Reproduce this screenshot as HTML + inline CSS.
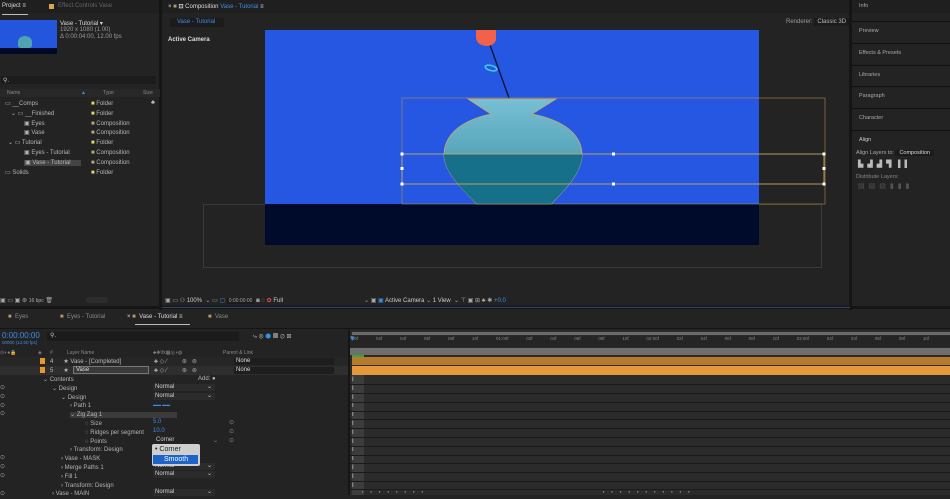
<!DOCTYPE html>
<html><head><meta charset="utf-8"><style>
*{margin:0;padding:0;box-sizing:border-box}
body{width:950px;height:495px;overflow:hidden;background:#232323;font-family:"Liberation Sans",sans-serif;font-size:6px;color:#a8a8a8;position:relative}
.a{position:absolute;white-space:nowrap}
.line{position:absolute;background:#111}
.sw{position:absolute;width:5px;height:5px;background:#e4c95a}
.or{background:#e8962e}
.row{position:absolute;left:0;width:350px;height:9px}
.tl{position:absolute;left:350px;width:600px;height:1px;background:#1a1a1a}
.blue{color:#3d8ee6}
.dd{position:absolute;width:62px;height:7px;background:#2b2b2b;color:#cfcfcf;padding-left:2px;line-height:7px}
</style></head><body>
<div class="a" style="left:0;top:0;width:950px;height:13px;background:#1f1f1f"></div>
<div class="a" style="left:2px;top:3px;color:#ddd">Project ≡</div>
<div class="a" style="left:2px;top:14px;width:26px;height:1px;background:#bbb"></div>
<div class="sw" style="left:49px;top:4px;background:#d9a84a"></div>
<div class="a" style="left:58px;top:3px;color:#666">Effect Controls Vase</div>
<div class="a" style="left:168px;top:3px;color:#ddd">× <span style="color:#b09a6a">■</span> <b>⊡</b> Composition <span class="blue">Vase - Tutorial</span> ≡</div>
<div class="a" style="left:170px;top:18px;width:54px;height:9px;background:#1b1b1b"></div>
<div class="a blue" style="left:177px;top:19px">Vase - Tutorial</div>
<div class="a" style="left:168px;top:37px;color:#ddd;font-weight:bold">Active Camera</div>
<div class="a" style="left:786px;top:19px;color:#999">Renderer: <span style="background:#1b1b1b;padding:1px 3px;color:#bbb">Classic 3D</span></div>
<div class="line" style="left:159px;top:0;width:3px;height:310px;background:#151515"></div>
<div class="line" style="left:849px;top:0;width:3px;height:310px;background:#151515"></div>
<div class="a" style="left:0;top:306px;width:950px;height:3px;background:#151515"></div>
<div class="a" style="left:162px;top:307px;width:688px;height:1px;background:#2a4a6a"></div>
<div class="a" style="left:0;top:20px;width:57px;height:34px;background:#2356dd"></div>
<div class="a" style="left:0;top:48px;width:57px;height:6px;background:#000a28"></div>
<div class="a" style="left:18px;top:36px;width:14px;height:12px;background:#4fa3b3;border-radius:50% 50% 20% 20%"></div>
<div class="a" style="left:60px;top:20px;color:#ddd">Vase - Tutorial ▾</div>
<div class="a" style="left:60px;top:27px;color:#999">1920 x 1080 (1.00)</div>
<div class="a" style="left:60px;top:34px;color:#999">Δ 0:00:04:00, 12.00 fps</div>
<div class="a" style="left:1px;top:76px;width:155px;height:8px;background:#1c1c1c"></div>
<div class="a" style="left:3px;top:77px;color:#ccc">⚲.</div>
<div class="a" style="left:0;top:89px;width:160px;height:8px;background:#282828"></div>
<div class="a" style="left:7px;top:90px;color:#888;font-size:5px">Name</div>
<div class="a" style="left:103px;top:90px;color:#888;font-size:5px">Type</div>
<div class="a" style="left:143px;top:90px;color:#888;font-size:5px">Size</div>
<div class="a" style="left:81px;top:90px;color:#4a90d9;font-size:5px">▲</div>
<div class="a" style="left:0;top:100px;line-height:9.8px;color:#b5b5b5">
<div style="padding-left:5px">▭ __Comps</div>
<div style="padding-left:11px">⌄ ▭ __Finished</div>
<div style="padding-left:24px">▣ Eyes</div>
<div style="padding-left:24px">▣ Vase</div>
<div style="padding-left:8px">⌄ ▭ Tutorial</div>
<div style="padding-left:24px">▣ Eyes - Tutorial</div>
<div style="padding-left:24px"><span style="background:#444;padding:0 10px 0 1px">▣ Vase - Tutorial</span></div>
<div style="padding-left:5px">▭ Solids</div>
</div>
<div class="a" style="left:91px;top:100px;line-height:9.8px;color:#b5b5b5">
<div><span style="color:#e4dd5a">■</span> Folder</div><div><span style="color:#e4dd5a">■</span> Folder</div><div><span style="color:#bba98a">■</span> Composition</div><div><span style="color:#bba98a">■</span> Composition</div><div><span style="color:#e4dd5a">■</span> Folder</div><div><span style="color:#bba98a">■</span> Composition</div><div><span style="color:#bba98a">■</span> Composition</div><div><span style="color:#e4dd5a">■</span> Folder</div>
</div>
<div class="a" style="left:151px;top:100px;color:#ccc">♣</div>
<div class="a" style="left:0;top:297px;color:#aaa">▣ ▭ ▣ ⊛ <span style="font-size:5px">16 bpc</span> 🗑</div>
<div class="a" style="left:86px;top:297px;width:22px;height:6px;background:#2d2d2d;border-radius:3px"></div>
<div class="a" style="left:203px;top:204px;width:619px;height:64px;border:1px solid #3a3a3a"></div>
<div class="a" style="left:265px;top:30px;width:494px;height:174px;background:#2557e2"></div>
<div class="a" style="left:265px;top:204px;width:494px;height:41px;background:#000a2a"></div>
<svg class="a" style="left:0;top:0" width="950" height="300">
<defs><linearGradient id="g" x1="0" y1="0" x2="0" y2="1"><stop offset="0" stop-color="#78bfd4"/><stop offset="1" stop-color="#3a8ea4"/></linearGradient>
<clipPath id="c"><rect x="400" y="154" width="200" height="60"/></clipPath></defs>
<line x1="490" y1="45" x2="509" y2="98" stroke="#0a1030" stroke-width="1.3"/>
<path d="M476 30 L496 30 L496 40 Q494 46 486 46 Q477 45 476 38 Z" fill="#f0634a"/>
<ellipse cx="491" cy="68" rx="6" ry="2.5" transform="rotate(15 491 68)" fill="none" stroke="#3fd0e8" stroke-width="1.5"/>
<path d="M468 99 L556 99 L532 114 C572 122 582 140 582 155 C582 172 565 190 551 204 L477 204 C463 190 444 172 444 155 C444 140 454 122 491 114 Z" fill="url(#g)" stroke="#c9a86a" stroke-width="0.8"/>
<path d="M468 99 L556 99 L532 114 C572 122 582 140 582 155 C582 172 565 190 551 204 L477 204 C463 190 444 172 444 155 C444 140 454 122 491 114 Z" fill="#17708a" clip-path="url(#c)"/>
<rect x="402" y="98" width="423" height="106" fill="none" stroke="#b8964a" stroke-width=".7" opacity=".8"/>
<rect x="402" y="154" width="422" height="30" fill="none" stroke="#c8a860" stroke-width=".9"/>
<g fill="#fff"><rect x="400.5" y="152.5" width="3" height="3"/><rect x="612" y="152.5" width="3" height="3"/><rect x="822.5" y="152.5" width="3" height="3"/><rect x="400.5" y="167" width="3" height="3"/><rect x="822.5" y="167" width="3" height="3"/><rect x="400.5" y="182.5" width="3" height="3"/><rect x="612" y="182.5" width="3" height="3"/><rect x="822.5" y="182.5" width="3" height="3"/></g>
</svg>
<div class="a" style="left:165px;top:297px;color:#aaa">▣ ▭ ⚇ <span style="color:#ccc">100%</span> &nbsp;⌄ ▭ <span class="blue">▢</span> <span style="font-size:5px;background:#1b1b1b;padding:0 2px">0:00:00:00</span> ◙ ◌ <span style="color:#e55">✿</span> <span style="color:#ccc">Full</span></div>
<div class="a" style="left:364px;top:297px;color:#aaa">⌄ ▣ <span class="blue">▣</span> <span style="color:#ccc">Active Camera</span> ⌄ <span style="color:#ccc">1 View</span> &nbsp;⌄ ⊤ ▣ ⊞ ♣ ✱ <span class="blue">+0.0</span></div>
<div class="a" style="left:852px;top:0;width:98px;height:306px;color:#aaa;font-size:5.5px">
<div style="height:22px;border-bottom:1px solid #111;padding:3px 7px">Info</div>
<div style="height:22px;border-bottom:1px solid #111;padding:6px 7px">Preview</div>
<div style="height:22px;border-bottom:1px solid #111;padding:6px 7px">Effects &amp; Presets</div>
<div style="height:21px;border-bottom:1px solid #111;padding:6px 7px">Libraries</div>
<div style="height:22px;border-bottom:1px solid #111;padding:6px 7px">Paragraph</div>
<div style="height:22px;border-bottom:1px solid #111;padding:6px 7px">Character</div>
<div style="padding:6px 7px;color:#ccc">Align</div>
</div>
<div class="a" style="left:856px;top:150px;color:#aaa;font-size:5.5px">Align Layers to: <span style="background:#1b1b1b;color:#ddd;padding:0 4px">Composition</span></div>
<div class="a" style="left:858px;top:160px;color:#bbb;font-size:7px;letter-spacing:4px">▙▟▟▜▐▌</div>
<div class="a" style="left:856px;top:174px;color:#888;font-size:5.5px">Distribute Layers:</div>
<div class="a" style="left:858px;top:182px;color:#555;font-size:7px;letter-spacing:4px">▤▤▤▮▮▮</div>
<div class="a" style="left:0;top:314px;color:#888"><span style="color:#b09a6a;margin-left:8px">■</span> &nbsp;Eyes</div>
<div class="a" style="left:60px;top:314px;color:#888"><span style="color:#b09a6a">■</span> &nbsp;Eyes - Tutorial</div>
<div class="a" style="left:127px;top:314px;color:#ddd">× <span style="color:#b09a6a">■</span> &nbsp;Vase - Tutorial ≡</div>
<div class="a" style="left:135px;top:324px;width:55px;height:1px;background:#bbb"></div>
<div class="a" style="left:208px;top:314px;color:#888"><span style="color:#b09a6a">■</span> &nbsp;Vase</div>
<div class="a" style="left:0;top:328px;width:950px;height:1px;background:#151515"></div>
<div class="a blue" style="left:2px;top:331px;font-size:8px">0:00:00:00</div>
<div class="a blue" style="left:2px;top:340px;font-size:4.5px">00000 (12.00 fps)</div>
<div class="a" style="left:47px;top:332px;width:192px;height:9px;background:#1b1b1b;color:#ccc;padding-left:3px">⚲.</div>
<div class="a" style="left:253px;top:333px;color:#bbb;font-size:7px">⤷ ⊗ <span class="blue">⬢</span> ▦ ⊘ ⊠</div>
<div class="a" style="left:0;top:349px;width:350px;height:8px;color:#888;font-size:5px;line-height:8px">
<span class="a" style="left:0">⊙◐●🔒</span><span class="a" style="left:38px">◈</span><span class="a" style="left:50px">#</span><span class="a" style="left:67px">Layer Name</span><span class="a" style="left:153px">♣✥\fx▦◎◑◍</span><span class="a" style="left:223px">Parent &amp; Link</span></div>
<div class="row" style="top:357px;background:#262626"></div>
<div class="row" style="top:366px;background:#2e2e2e"></div>
<div class="a or" style="left:40px;top:358px;width:5px;height:6px"></div>
<div class="a or" style="left:40px;top:367px;width:5px;height:6px"></div>
<div class="a" style="left:50px;top:358px;color:#bbb">4 &nbsp;&nbsp;&nbsp;&nbsp; ★ Vase - [Completed]</div>
<div class="a" style="left:50px;top:367px;color:#bbb">5 &nbsp;&nbsp;&nbsp;&nbsp; ★</div>
<div class="a" style="left:73px;top:366px;width:76px;height:8px;border:1px solid #777;background:#3a3a3a;color:#ddd;padding-left:2px;line-height:6px">Vase</div>
<div class="a" style="left:154px;top:358px;color:#aaa">♣ ◇ ⁄ &nbsp;&nbsp;&nbsp;&nbsp;&nbsp;&nbsp;&nbsp; ⊛ &nbsp; ⊚</div>
<div class="a" style="left:154px;top:367px;color:#aaa">♣ ◇ ⁄ &nbsp;&nbsp;&nbsp;&nbsp;&nbsp;&nbsp;&nbsp; ⊛ &nbsp; ⊚</div>
<div class="a" style="left:234px;top:358px;width:100px;height:7px;background:#1e1e1e;color:#ddd;padding-left:2px">None</div>
<div class="a" style="left:234px;top:367px;width:100px;height:7px;background:#1e1e1e;color:#ddd;padding-left:2px">None</div>
<div class="a" style="left:0;top:376px;color:#b5b5b5;line-height:8.8px">
<div style="padding-left:43px">⌄ Contents</div>
<div style="padding-left:52px">⌄ Design</div>
<div style="padding-left:61px">⌄ Design</div>
<div style="padding-left:70px">› Path 1</div>
<div style="padding-left:70px"><span style="background:#3b3b3b;padding-right:75px">⌄ Zig Zag 1</span></div>
<div style="padding-left:85px">◌ Size</div>
<div style="padding-left:85px">◌ Ridges per segment</div>
<div style="padding-left:85px">◌ Points</div>
<div style="padding-left:70px">› Transform: Design</div>
<div style="padding-left:61px">› Vase - MASK</div>
<div style="padding-left:61px">› Merge Paths 1</div>
<div style="padding-left:61px">› Fill 1</div>
<div style="padding-left:61px">› Transform: Design</div>
<div style="padding-left:52px">› Vase - MAIN</div>
</div>
<div class="a" style="left:198px;top:376px;color:#bbb">Add: ●</div>
<div class="dd" style="left:153px;top:384px">Normal <span style="float:right;padding-right:3px">⌄</span></div>
<div class="dd" style="left:153px;top:393px">Normal <span style="float:right;padding-right:3px">⌄</span></div>
<div class="a blue" style="left:153px;top:402px;font-size:4px">▬▬ ▬▬</div>
<div class="a blue" style="left:153px;top:419px">5.0</div>
<div class="a blue" style="left:153px;top:428px">10.0</div>
<div class="a" style="left:156px;top:437px;color:#ccc">Corner</div>
<div class="a" style="left:213px;top:437px;color:#888">⌄</div>
<div class="a" style="left:229px;top:419px;color:#888;line-height:9px">⊙<br>⊙<br>⊙</div>
<div class="dd" style="left:153px;top:463px">Normal <span style="float:right;padding-right:3px">⌄</span></div>
<div class="dd" style="left:153px;top:471px">Normal <span style="float:right;padding-right:3px">⌄</span></div>
<div class="dd" style="left:153px;top:489px">Normal <span style="float:right;padding-right:3px">⌄</span></div>
<div class="a" style="left:152px;top:444px;width:48px;height:22px;background:#cfcfcf;border-radius:2px;z-index:5"></div>
<div class="a" style="left:155px;top:446px;color:#222;font-size:7px;z-index:6">• Corner</div>
<div class="a" style="left:153px;top:455px;width:45px;height:9px;background:#1e63c8;color:#fff;font-size:7px;padding-left:11px;line-height:9px;z-index:6">Smooth</div>
<div class="a" style="left:0;top:384px;line-height:8.8px;color:#999">
<div>⊙</div><div>⊙</div><div>⊙</div><div>⊙</div><div>&nbsp;</div><div>&nbsp;</div><div>&nbsp;</div><div>&nbsp;</div><div>⊙</div><div>⊙</div><div>⊙</div><div>&nbsp;</div><div>⊙</div></div>
<div class="a" style="left:348px;top:330px;width:2px;height:165px;background:#151515"></div>
<div class="a" style="left:350px;top:330px;width:600px;height:165px;background:#2b2b2b"></div>
<div class="a" style="left:352px;top:332px;width:598px;height:3px;background:#6a6a6a"></div>
<div class="a" style="left:350px;top:336px;width:600px;height:11px;background:#252525"></div>
<div class="a" style="left:352px;top:336px;width:598px;color:#888;font-size:4.5px;word-spacing:16.5px">00f 02f 04f 06f 08f 10f 01:00f 02f 04f 06f 08f 10f 02:00f 02f 04f 06f 08f 10f 03:00f 02f 04f 06f 08f 10f</div>
<div class="a" style="left:350px;top:348px;width:600px;height:7px;background:#6e6e6e"></div>
<div class="a" style="left:352px;top:355px;width:12px;height:2px;background:#3a3"></div>
<div class="a" style="left:352px;top:357px;width:598px;height:8px;background:#b77a2c"></div>
<div class="a" style="left:352px;top:366px;width:598px;height:9px;background:#e49a3a"></div>
<div class="a" style="left:352px;top:375px;width:12px;height:120px;background:#3c3c3c"></div>
<div class="a" style="left:350px;top:334px;width:7px;height:10px;color:#3d8ee6;font-size:9px;line-height:8px">▾</div>
<div class="a" style="left:352px;top:376px;color:#ddd;line-height:8.8px;font-size:6px">I<br>I<br>I<br>I<br>I<br>I<br>I<br>I<br>I<br>I<br>I<br>I<br>I</div>
<div class="tl" style="top:384px"></div><div class="tl" style="top:393px"></div><div class="tl" style="top:402px"></div><div class="tl" style="top:411px"></div><div class="tl" style="top:419px"></div><div class="tl" style="top:428px"></div><div class="tl" style="top:437px"></div><div class="tl" style="top:446px"></div><div class="tl" style="top:455px"></div><div class="tl" style="top:463px"></div><div class="tl" style="top:472px"></div><div class="tl" style="top:481px"></div><div class="tl" style="top:489px"></div>
<div class="a" style="left:362px;top:489px;color:#ccc;font-size:4px;word-spacing:6px">▪ ▪ ▪ ▪ ▪ ▪ ▪ ▪</div>
<div class="a" style="left:603px;top:489px;color:#ccc;font-size:4px;word-spacing:6px">▪ ▪ ▪ ▪ ▪ ▪ ▪ ▪ ▪ ▪ ▪</div>
</body></html>
